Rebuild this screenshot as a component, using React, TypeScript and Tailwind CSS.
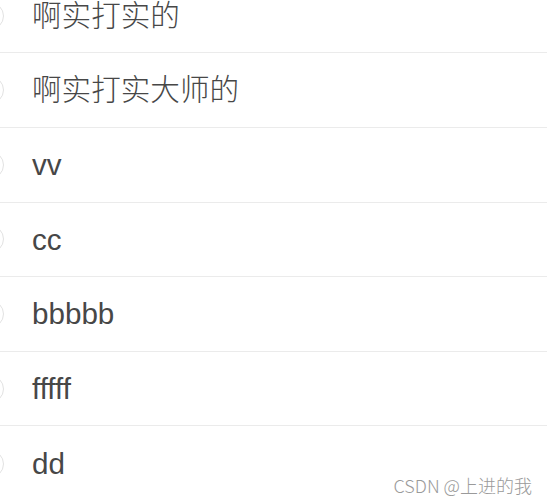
import React from 'react';

const items = ['啊实打实的', '啊实打实大师的', 'vv', 'cc', 'bbbbb', 'fffff', 'dd'];

export default function App() {
  return (
    <div className="relative w-[547px] h-[501px] overflow-hidden bg-white">
      <ul className="-mt-[21.2px]">
        {items.map((label) => (
          <li
            key={label}
            className="flex items-center h-[74.6px] border-b border-[#ebebeb] last:border-b-0"
          >
            <span className="-ml-[24px] w-[28px] h-[28px] shrink-0 rounded-full border border-[#e2e2e2] bg-white" />
            <span className="ml-[28px] text-[29.6px] leading-none font-light text-[#474747] font-['Liberation_Sans','Noto_Sans_CJK_SC',sans-serif]">
              {label}
            </span>
          </li>
        ))}
      </ul>
      <div className="absolute right-[15px] bottom-[7px] text-[18px] leading-none font-light text-[#9a9a9a] font-['Noto_Sans_CJK_SC',sans-serif]">
        CSDN @上进的我
      </div>
    </div>
  );
}
